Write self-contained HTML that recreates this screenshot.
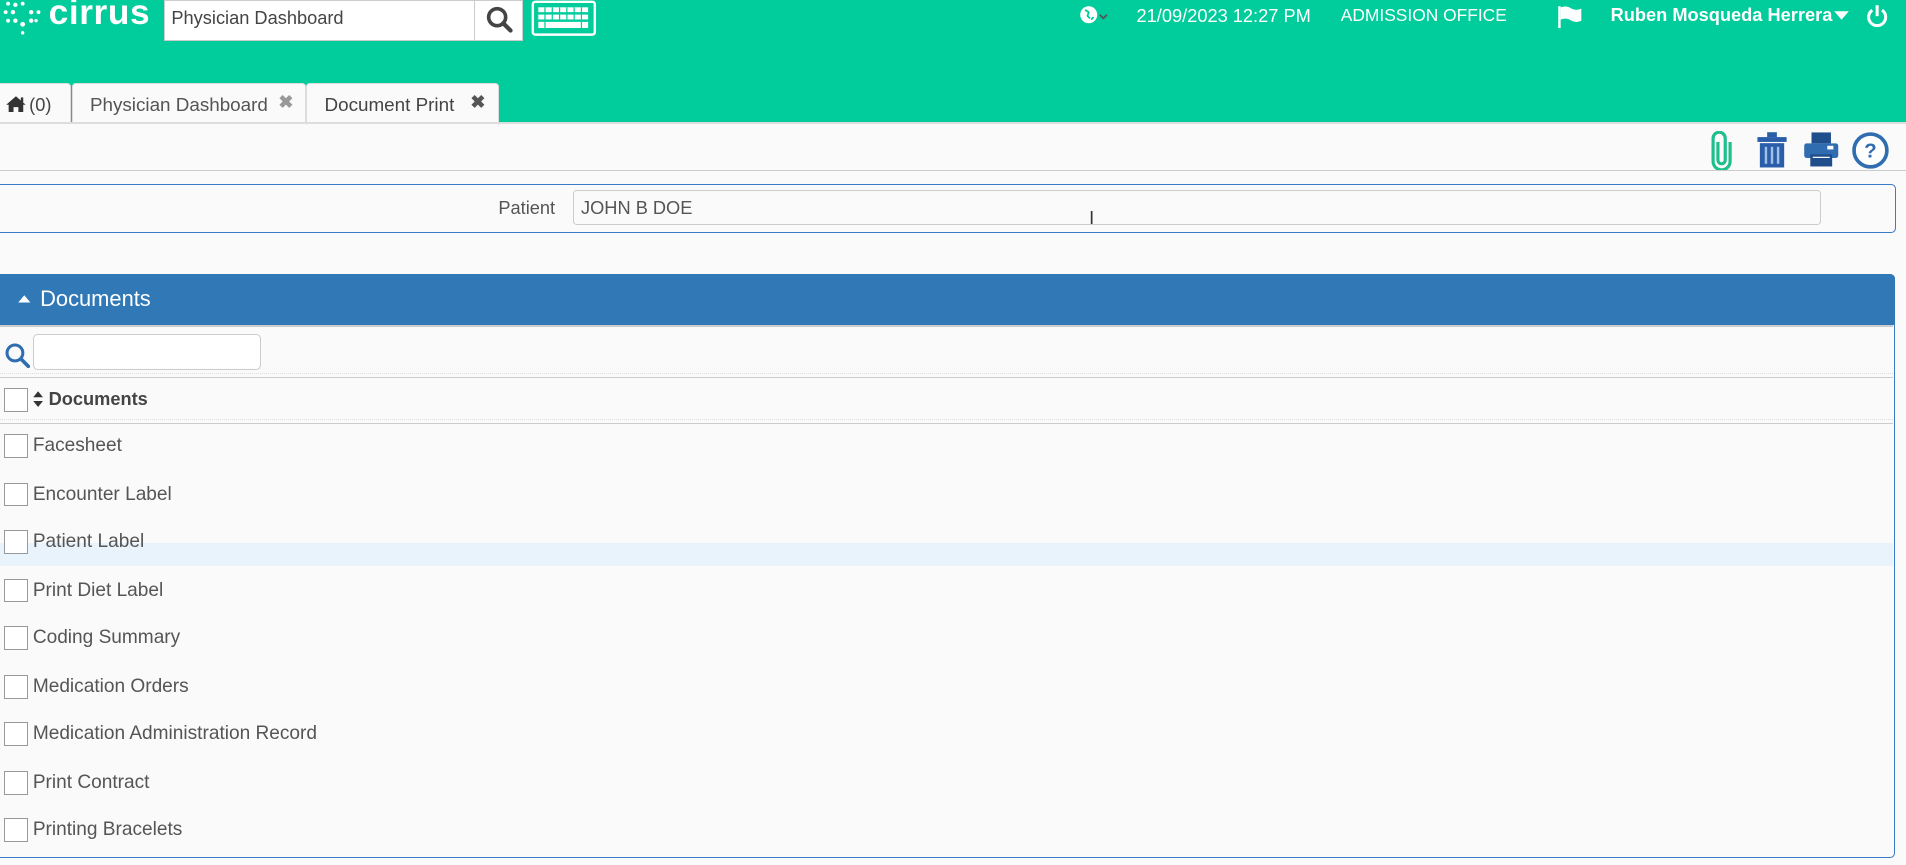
<!DOCTYPE html>
<html><head><meta charset="utf-8"><style>
html,body{margin:0;padding:0;}
body{width:1906px;height:865px;overflow:hidden;background:#fafafa;font-family:"Liberation Sans",sans-serif;}
#w{zoom:1.21556;width:1568px;height:712px;position:relative;overflow:hidden;background:#fafafa;}
.a{position:absolute;}
.cb{position:absolute;left:3px;width:18px;height:18px;border:1px solid #999;background:#fff;}
.it{position:absolute;left:27px;font-size:15.7px;color:#555;}
</style></head><body><div id="w">
<div class="a" style="left:0;top:0;width:1568px;height:100px;background:#00cc9c"></div>
<svg class="a" style="left:2px;top:0" width="34" height="30"><g fill="#fff"><circle cx="5" cy="3" r="1.6"/><circle cx="11" cy="4" r="1.8"/><circle cx="17" cy="3" r="1.6"/><circle cx="3" cy="10" r="1.6"/><circle cx="9" cy="10" r="1.8"/><circle cx="24" cy="10" r="1.8"/><circle cx="30" cy="10" r="1.6"/><circle cx="5" cy="17" r="1.6"/><circle cx="11" cy="17" r="1.8"/><circle cx="17" cy="20" r="2"/><circle cx="24" cy="17" r="1.8"/><circle cx="28" cy="17" r="1.4"/><circle cx="17" cy="27" r="1.4"/></g></svg>
<div class="a" style="left:40px;top:-6px;font-size:29px;font-weight:bold;color:#fff;letter-spacing:0.5px">cirrus</div>
<div class="a" style="left:135px;top:0;width:295px;height:34px;background:#fff;border:1px solid #ccc;box-sizing:border-box"></div>
<div class="a" style="left:141px;top:6px;font-size:15px;color:#444">Physician Dashboard</div>
<div class="a" style="left:390px;top:0;width:1px;height:34px;background:#ccc"></div>
<svg class="a" style="left:399px;top:4px" width="24" height="24"><circle cx="10" cy="10" r="7" stroke="#444" stroke-width="3" fill="none"/><line x1="15" y1="15" x2="21" y2="21" stroke="#444" stroke-width="3.5" stroke-linecap="round"/></svg>
<svg class="a" style="left:437px;top:0" width="54" height="30"><rect x="1.5" y="1.5" width="51" height="27" rx="2" fill="none" stroke="#fff" stroke-width="2"/><g fill="#fff"><rect x="6" y="6" width="41" height="4"/><rect x="6" y="12" width="41" height="4"/><rect x="6" y="18" width="41" height="5"/></g><g fill="#00cc9c"><rect x="11" y="6" width="1" height="10"/><rect x="17" y="6" width="1" height="10"/><rect x="23" y="6" width="1" height="10"/><rect x="29" y="6" width="1" height="10"/><rect x="35" y="6" width="1" height="10"/><rect x="41" y="6" width="1" height="10"/><rect x="11" y="18" width="1" height="5"/><rect x="41" y="18" width="1" height="5"/></g></svg>
<svg class="a" style="left:888px;top:4px" width="28" height="18"><circle cx="8" cy="8" r="7" fill="#fff"/><path d="M5 4 l3 2 -1 3 2 2 M10 12 l2 -2" stroke="#00cc9c" stroke-width="1.5" fill="none"/><path d="M17 8 l3 3 3 -3" stroke="#555" stroke-width="1.5" fill="none"/></svg>
<div class="a" style="left:935px;top:4px;font-size:15px;color:#fff">21/09/2023 12:27 PM</div>
<div class="a" style="left:1103px;top:4px;font-size:14.3px;color:#fff">ADMISSION OFFICE</div>
<svg class="a" style="left:1281px;top:4px" width="22" height="20"><rect x="1" y="1" width="2" height="18" fill="#fff"/><path d="M3 2 q5 -2 9 1 q4 2 8 0 v10 q-4 2 -8 0 q-4 -3 -9 -1z" fill="#fff"/></svg>
<div class="a" style="left:1325px;top:3px;font-size:15px;font-weight:bold;color:#fff">Ruben Mosqueda Herrera</div>
<svg class="a" style="left:1508px;top:8px" width="14" height="10"><path d="M1 1 h12 l-6 7z" fill="#fff"/></svg>
<svg class="a" style="left:1534px;top:3px" width="20" height="20"><path d="M6 5 a7 7 0 1 0 8 0" stroke="#fff" stroke-width="2.5" fill="none"/><line x1="10" y1="1" x2="10" y2="10" stroke="#fff" stroke-width="2.5"/></svg>
<div class="a" style="left:-4px;top:68px;width:61px;height:33px;background:#fafafa;border:1px solid #ddd;border-bottom:none;border-radius:3px 3px 0 0"></div>
<svg class="a" style="left:4px;top:78px" width="18" height="15"><path d="M9 1 L1 8 h2 v6 h4 v-4 h4 v4 h4 v-6 h2z" fill="#333"/><rect x="13" y="2" width="2" height="4" fill="#333"/></svg>
<div class="a" style="left:24px;top:77px;font-size:15px;color:#444">(0)</div>
<div class="a" style="left:59px;top:68px;width:191px;height:33px;background:#fafafa;border:1px solid #ddd;border-bottom:none;border-radius:3px 3px 0 0"></div>
<div class="a" style="left:74px;top:77px;font-size:15.5px;color:#555">Physician Dashboard</div>
<div class="a" style="left:229px;top:75px;font-size:15px;color:#999;font-weight:bold">✖</div>
<div class="a" style="left:252px;top:68px;width:157px;height:34px;background:#fafafa;border:1px solid #ddd;border-bottom:none;border-radius:3px 3px 0 0"></div>
<div class="a" style="left:267px;top:77px;font-size:15.5px;color:#444">Document Print</div>
<div class="a" style="left:387px;top:75px;font-size:15px;color:#555;font-weight:bold">✖</div>
<div class="a" style="left:0;top:100px;width:1568px;height:2px;background:#ddd"></div>
<svg class="a" style="left:1404px;top:108px" width="24" height="32"><path d="M9 9 v15 a3 3 0 0 0 6 0 V6 a5 5 0 0 0 -10 0 v19 a7 7 0 0 0 14 0 V9" stroke="#1dbf8c" stroke-width="2.6" fill="none"/></svg>
<svg class="a" style="left:1444px;top:108px" width="28" height="32"><rect x="2" y="5" width="24" height="4" fill="#2b5ea8"/><rect x="10" y="1" width="8" height="4" fill="#2b5ea8"/><rect x="4" y="10" width="20" height="20" fill="#2b5ea8"/><g fill="#9fc0e8"><rect x="8" y="13" width="2" height="14"/><rect x="13" y="13" width="2" height="14"/><rect x="18" y="13" width="2" height="14"/></g></svg>
<svg class="a" style="left:1483px;top:107px" width="30" height="32"><rect x="7" y="2" width="16" height="9" fill="#1f4e8c"/><rect x="1" y="11" width="28" height="12" rx="2" fill="#2f6db0"/><rect x="20" y="13" width="5" height="3" fill="#fff"/><rect x="6" y="20" width="18" height="10" fill="#1f4e8c"/><rect x="8" y="22" width="14" height="1" fill="#fff"/></svg>
<svg class="a" style="left:1523px;top:108px" width="32" height="32"><circle cx="16" cy="16" r="13.5" stroke="#2f6db0" stroke-width="3" fill="#fff"/><text x="16" y="22" text-anchor="middle" font-size="17" font-weight="bold" fill="#2f6db0" font-family="Liberation Sans">?</text></svg>
<div class="a" style="left:0;top:140px;width:1568px;height:1px;background:#ccc"></div>
<div class="a" style="left:-6px;top:151px;width:1564px;height:39px;border:1px solid #3a7bc8;border-radius:4px;background:#fafafa"></div>
<div class="a" style="left:410px;top:162px;font-size:15px;color:#555">Patient</div>
<div class="a" style="left:471px;top:156px;width:1027px;height:29px;border:1px solid #ccc;border-radius:3px;background:#fafafa;box-sizing:border-box"></div>
<div class="a" style="left:478px;top:162px;font-size:15px;color:#555">JOHN B DOE</div>
<div class="a" style="left:896px;top:170px;font-size:15px;color:#333">I</div>
<div class="a" style="left:-6px;top:225px;width:1563px;height:479px;border:1px solid #3a7bc8;border-radius:4px;background:#fafafa"></div>
<div class="a" style="left:-6px;top:225px;width:1565px;height:42px;background:#3178b7;border-radius:4px 4px 0 0"></div>
<svg class="a" style="left:14px;top:242px" width="12" height="8"><path d="M1 7 L6 1 L11 7z" fill="#fff"/></svg>
<div class="a" style="left:33px;top:235px;font-size:18px;color:#fff">Documents</div>
<div class="a" style="left:0;top:267px;width:1557px;height:2px;background:#ccc"></div>
<svg class="a" style="left:3px;top:281px" width="22" height="22"><circle cx="9" cy="9" r="6.5" stroke="#2f6db0" stroke-width="2.5" fill="none"/><line x1="14" y1="14" x2="20" y2="20" stroke="#2f6db0" stroke-width="3" stroke-linecap="round"/></svg>
<div class="a" style="left:27px;top:275px;width:188px;height:29px;border:1px solid #ccc;border-radius:4px;background:#fff;box-sizing:border-box"></div>
<div class="a" style="left:0;top:307px;width:1557px;height:2px;border-top:1px dotted #ddd;border-bottom:1px solid #ccc"></div>
<div class="cb" style="top:319px"></div>
<svg class="a" style="left:26px;top:321px" width="10" height="16"><path d="M1 6 L5 1 L9 6z M1 9 L5 14 L9 9z" fill="#333"/></svg>
<div class="a" style="left:40px;top:319px;font-size:15px;font-weight:bold;color:#444">Documents</div>
<div class="a" style="left:0;top:345px;width:1557px;height:2px;border-top:1px dotted #ddd;border-bottom:1px solid #ccc"></div>
<div class="a" style="left:0;top:447px;width:1557px;height:19px;background:#e9f3fc"></div>
<div class="cb" style="top:357px"></div><div class="it" style="top:358px">Facesheet</div>
<div class="cb" style="top:397px"></div><div class="it" style="top:398px">Encounter Label</div>
<div class="cb" style="top:436px"></div><div class="it" style="top:437px">Patient Label</div>
<div class="cb" style="top:476px"></div><div class="it" style="top:477px">Print Diet Label</div>
<div class="cb" style="top:515px"></div><div class="it" style="top:516px">Coding Summary</div>
<div class="cb" style="top:555px"></div><div class="it" style="top:556px">Medication Orders</div>
<div class="cb" style="top:594px"></div><div class="it" style="top:595px">Medication Administration Record</div>
<div class="cb" style="top:634px"></div><div class="it" style="top:635px">Print Contract</div>
<div class="cb" style="top:673px"></div><div class="it" style="top:674px">Printing Bracelets</div>
</div></body></html>
